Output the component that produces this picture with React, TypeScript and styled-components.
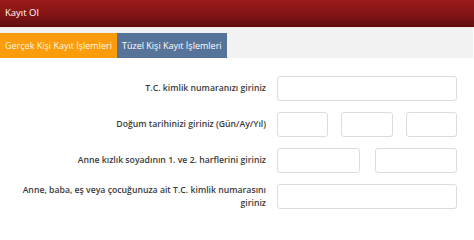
import React from 'react';
import styled, { createGlobalStyle } from 'styled-components';

const GlobalStyle = createGlobalStyle`
  body {
    margin: 0;
    background: #fff;
    font-family: "Open Sans", "Liberation Sans", sans-serif;
  }
`;

const Page = styled.div`
  width: 474px;
`;

const Header = styled.header`
  height: 27px;
  background: linear-gradient(to bottom, #9c1a1a 0%, #861517 50%, #5e0e10 100%);
  border-bottom: 1px solid #f7eaea;
  color: #fff;
  font-size: 9.5px;
  line-height: 26px;
  padding-left: 5px;
`;

const TabBar = styled.nav`
  display: flex;
  align-items: flex-end;
  height: 30px;
  margin-right: 1px;
  background: #f2f2f2;
`;

const Tab = styled.button<{ $active?: boolean }>`
  height: 25px;
  padding: 0 5px;
  border: none;
  border-radius: 0;
  font-family: inherit;
  font-size: 9px;
  color: ${({ $active }) => ($active ? '#fff6e0' : '#fff')};
  background: ${({ $active }) => ($active ? '#fb9c0c' : '#56749a')};
`;

const Form = styled.form`
  display: grid;
  grid-template-columns: 266px 180px;
  column-gap: 11px;
  row-gap: 11px;
  padding-top: 18px;
`;

const Label = styled.label`
  align-self: center;
  text-align: right;
  font-size: 8.7px;
  font-weight: 600;
  line-height: 13px;
  color: #3a3a3a;
  padding-left: 14px;
`;

const Fields = styled.div<{ $count: number }>`
  display: grid;
  grid-template-columns: repeat(${({ $count }) => $count}, 1fr);
  column-gap: ${({ $count }) => ($count === 3 ? 13 : 15)}px;
`;

const Input = styled.input`
  box-sizing: border-box;
  width: 100%;
  height: 25px;
  border: 1px solid #dcdcdc;
  border-radius: 3px;
  background: #fff;
`;

const rows = [
  { label: 'T.C. kimlik numaranızı giriniz', count: 1 },
  { label: 'Doğum tarihinizi giriniz (Gün/Ay/Yıl)', count: 3 },
  { label: 'Anne kızlık soyadının 1. ve 2. harflerini giriniz', count: 2 },
  { label: 'Anne, baba, eş veya çocuğunuza ait T.C. kimlik numarasını giriniz', count: 1 },
];

export default function App() {
  return (
    <Page>
      <GlobalStyle />
      <Header>Kayıt Ol</Header>
      <TabBar>
        <Tab $active>Gerçek Kişi Kayıt İşlemleri</Tab>
        <Tab>Tüzel Kişi Kayıt İşlemleri</Tab>
      </TabBar>
      <Form>
        {rows.map((row) => (
          <React.Fragment key={row.label}>
            <Label>{row.label}</Label>
            <Fields $count={row.count}>
              {Array.from({ length: row.count }, (_, i) => (
                <Input key={i} />
              ))}
            </Fields>
          </React.Fragment>
        ))}
      </Form>
    </Page>
  );
}
